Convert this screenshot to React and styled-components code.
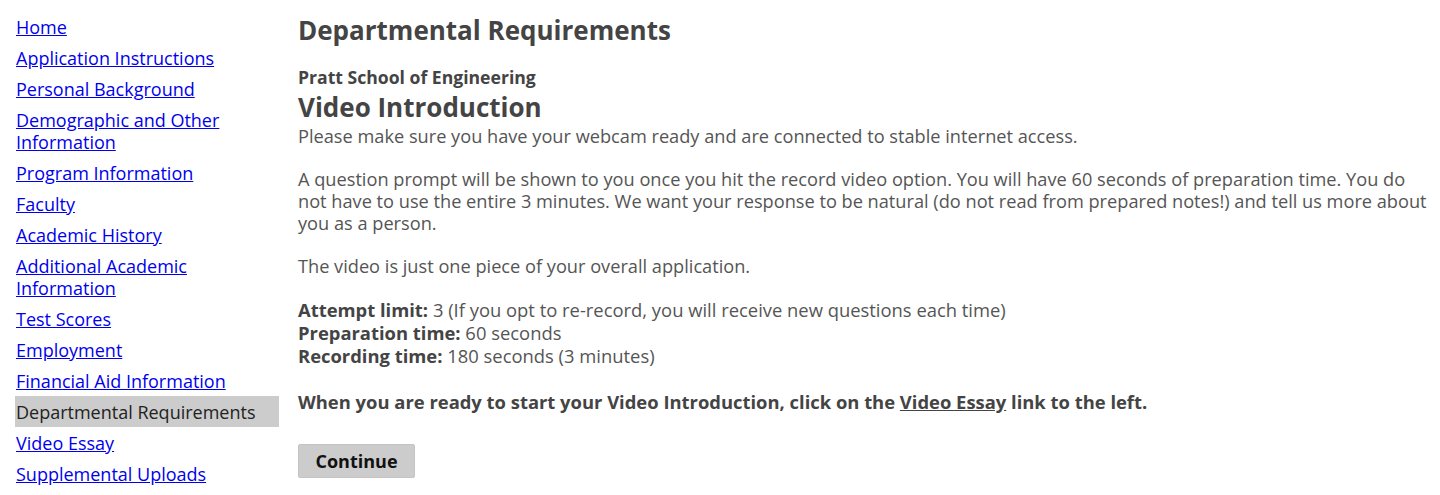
import React from "react";
import styled, { createGlobalStyle } from "styled-components";

const GlobalStyle = createGlobalStyle`
  body {
    margin: 0;
    background: #fff;
    font-family: "Open Sans", Lato, sans-serif;
  }
`;

const navItems = [
  "Home",
  "Application Instructions",
  "Personal Background",
  "Demographic and Other Information",
  "Program Information",
  "Faculty",
  "Academic History",
  "Additional Academic Information",
  "Test Scores",
  "Employment",
  "Financial Aid Information",
  "Departmental Requirements",
  "Video Essay",
  "Supplemental Uploads",
];

const App = () => {
  return (
    <>
      <GlobalStyle />
      <Page>
        <Sidebar>
          {navItems.map((item) => (
            <NavItem key={item} $active={item === "Departmental Requirements"}>
              {item === "Departmental Requirements" ? (
                <span>{item}</span>
              ) : (
                <a href="#">{item}</a>
              )}
            </NavItem>
          ))}
        </Sidebar>
        <Main>
          <PageTitle>Departmental Requirements</PageTitle>
          <School>Pratt School of Engineering</School>
          <SectionTitle>Video Introduction</SectionTitle>
          <Text>
            Please make sure you have your webcam ready and are connected to
            stable internet access.
          </Text>
          <Text>
            A question prompt will be shown to you once you hit the record
            video option. You will have 60 seconds of preparation time. You do
            not have to use the entire 3 minutes. We want your response to be
            natural (do not read from prepared notes!) and tell us more about
            you as a person.
          </Text>
          <Text>The video is just one piece of your overall application.</Text>
          <Details>
            <b>Attempt limit:</b> 3 (If you opt to re-record, you will receive
            new questions each time)
            <br />
            <b>Preparation time:</b> 60 seconds
            <br />
            <b>Recording time:</b> 180 seconds (3 minutes)
          </Details>
          <Notice>
            When you are ready to start your Video Introduction, click on the{" "}
            <InlineLink href="#">Video Essay</InlineLink> link to the left.
          </Notice>
          <Button>Continue</Button>
        </Main>
      </Page>
    </>
  );
};

const Page = styled.div`
  display: flex;
  align-items: flex-start;
  padding: 8px 0 0 15px;
`;

const Sidebar = styled.ul`
  list-style: none;
  margin: 8px 0 0;
  padding: 0;
  width: 264px;
  flex-shrink: 0;
  display: flex;
  flex-direction: column;
  gap: 9px;
`;

const NavItem = styled.li`
  font-size: 18px;
  line-height: 22px;
  padding: ${(p) => (p.$active ? "5px 1px 4px" : "0 1px")};
  margin: ${(p) => (p.$active ? "-5px 0 -4px" : "0")};
  background: ${(p) => (p.$active ? "#cccccc" : "transparent")};
  color: #222;
  a {
    color: #0000ee;
    text-decoration: underline;
  }
`;

const Main = styled.div`
  flex: 1;
  padding-left: 19px;
  padding-right: 6px;
  color: #555;
`;

const PageTitle = styled.h1`
  font-size: 26px;
  line-height: 32px;
  font-weight: 700;
  color: #444;
  margin: 6px 0 20px;
`;

const School = styled.div`
  font-size: 17.6px;
  line-height: 22px;
  font-weight: 700;
  color: #444;
`;

const SectionTitle = styled.h2`
  font-size: 26px;
  line-height: 32px;
  font-weight: 700;
  color: #444;
  margin: 3px 0 2px;
`;

const Text = styled.p`
  font-size: 18.2px;
  line-height: 22px;
  margin: 0 0 21px;
`;

const Details = styled.p`
  font-size: 18.4px;
  line-height: 23px;
  margin: 0 0 24px;
  b {
    color: #444;
  }
`;

const Notice = styled.p`
  font-size: 18.4px;
  line-height: 22px;
  font-weight: 700;
  color: #444;
  margin: 0 0 31px;
`;

const InlineLink = styled.a`
  color: #444;
  text-decoration: underline;
`;

const Button = styled.button`
  font-family: inherit;
  font-size: 18px;
  font-weight: 700;
  color: #111;
  background: #cccccc;
  border: 1px solid #c4c4c4;
  border-radius: 2px;
  width: 117px;
  height: 34px;
  padding: 0;
  cursor: pointer;
`;

export default App;
